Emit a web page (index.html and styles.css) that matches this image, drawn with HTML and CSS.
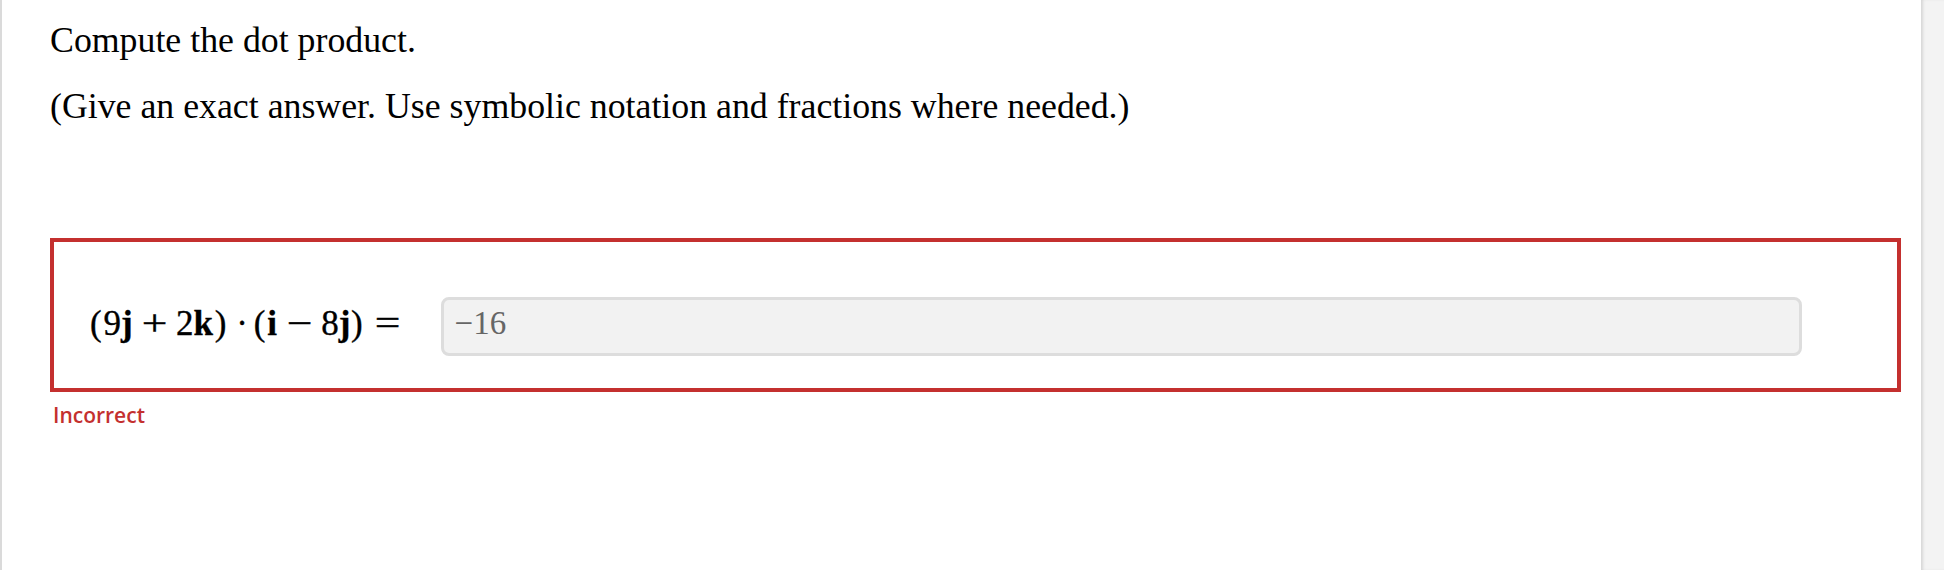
FILE: index.html
```html
<!DOCTYPE html>
<html>
<head>
<meta charset="utf-8">
<link rel="stylesheet" href="styles.css">
</head>
<body>
<div class="page">
  <main class="main">
    <div class="intro">
      <p class="para">Compute the dot product.</p>
      <p class="para">(Give an exact answer. Use symbolic notation and fractions where needed.)</p>
    </div>
    <div class="question">
      <div class="math"><span class="paren">(</span><span class="num">9</span><b class="vec vj">j</b><span class="op wide">+</span><span class="num">2</span><b class="vec vk">k</b><span class="paren">)</span><span class="op dot">·</span><span class="paren">(</span><b class="vec vi">i</b><span class="op wide">−</span><span class="num">8</span><b class="vec vj">j</b><span class="paren">)</span><span class="op rel wide">=</span></div>
      <div class="answer">−16</div>
    </div>
    <div class="feedback">Incorrect</div>
  </main>
  <aside class="side"></aside>
</div>
</body>
</html>
```

FILE: styles.css
```css
html, body {
  margin: 0;
  padding: 0;
  background: #ffffff;
}

.page {
  display: flex;
  height: 570px;
}

.main {
  flex: 1;
  border-left: 2px solid #dadada;
  padding: 20px 20px 0 48px;
  font-family: "Liberation Serif", "Times New Roman", serif;
  color: #000;
}

.side {
  width: 23px;
  background: #f3f3f3;
  box-shadow: inset 3px 0 3px -1px #d6d6d6;
}

.intro {
  display: flex;
  flex-direction: column;
  gap: 26px;
}

.para {
  margin: 0;
  font-size: 35.8px;
  line-height: 40px;
}

.question {
  margin-top: 112px;
  border: 4px solid #c4302f;
  padding: 55px 95px 32px 36px;
  display: flex;
  align-items: flex-start;
}

.math {
  font-size: 35px;
  line-height: 40px;
  white-space: nowrap;
  display: flex;
  align-items: baseline;
  margin-top: 7px;
  -webkit-text-stroke: 0.35px #000;
}

.math > * {
  display: inline-block;
}

.paren {
  width: 0.389em;
}

.num {
  width: 0.5em;
}

.vec {
  font-weight: bold;
}

.vj {
  width: 0.35em;
}

.vk {
  width: 0.607em;
}

.vi {
  width: 0.319em;
}

.op {
  width: 0.778em;
  margin: 0 0.222em;
  text-align: center;
}

.dot {
  width: 0.278em;
}

.wide {
  transform: scaleX(1.3);
}

.rel {
  margin: 0 0 0 0.278em;
}

.answer {
  flex: 1;
  margin-left: 39px;
  height: 47px;
  padding: 0 11px 6px 11px;
  border: 3px solid #dddddd;
  border-radius: 8px;
  background: #f2f2f2;
  color: #666666;
  font-size: 33px;
  line-height: 47px;
}

.feedback {
  margin: 9px 0 0 3px;
  font-family: "Open Sans", "Liberation Sans", sans-serif;
  font-weight: 600;
  font-size: 21px;
  line-height: 28px;
  color: #c4302f;
}
```
